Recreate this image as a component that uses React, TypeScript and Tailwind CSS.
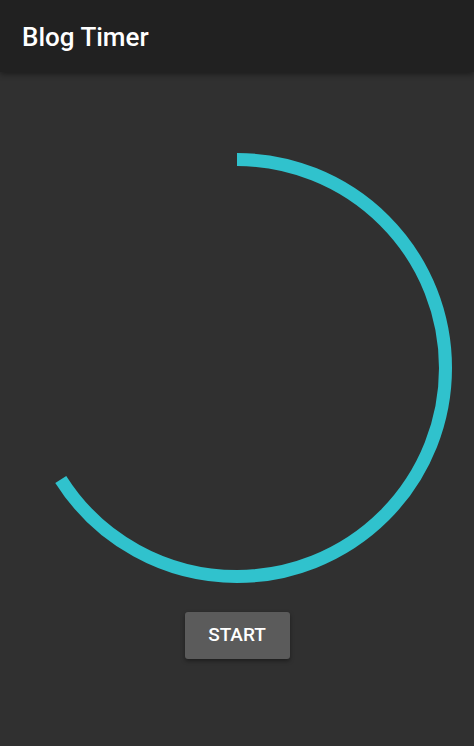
import React from "react";

export default function App() {
  const r = 208.5;
  const c = 2 * Math.PI * r;
  const progress = 0.66;
  return (
    <div className="w-[474px] h-[746px] bg-[#303030] flex flex-col overflow-hidden" style={{ fontFamily: "Roboto, 'Noto Sans', sans-serif" }}>
      <div className="h-[72px] bg-[#212121] flex items-center pl-[22px] pt-[2px] shadow-[0_2px_6px_rgba(0,0,0,0.45)] relative z-10">
        <span className="text-white text-[26px] font-medium leading-none">Blog Timer</span>
      </div>
      <div className="flex flex-col items-center">
        <svg width="430" height="430" viewBox="0 0 430 430" className="mt-[80.5px]">
          <circle
            cx="215"
            cy="215"
            r={r}
            fill="none"
            stroke="#30c2cd"
            strokeWidth="13"
            strokeDasharray={`${c * progress} ${c}`}
            transform="rotate(-90 215 215)"
          />
        </svg>
        <button className="mt-[29.5px] w-[105px] h-[47px] bg-[#5b5b5b] rounded-[3px] text-white text-[19px] font-medium shadow-[0_2px_4px_rgba(0,0,0,0.4)] flex items-center justify-center">
          START
        </button>
      </div>
    </div>
  );
}
